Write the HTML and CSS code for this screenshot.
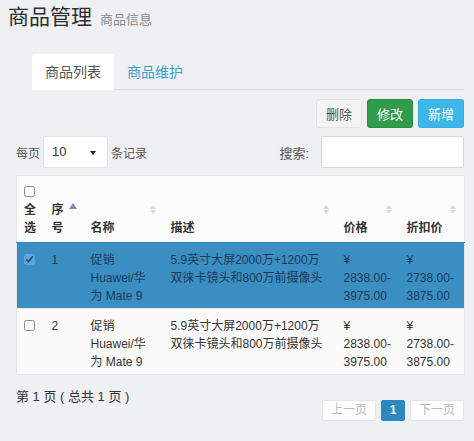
FILE: index.html
```html
<!DOCTYPE html>
<html lang="zh-CN">
<head>
<meta charset="utf-8">
<title>商品管理</title>
<link rel="stylesheet" href="styles.css">
</head>
<body>
<header class="page-header">
  <h1 class="title">商品管理</h1>
  <span class="subtitle">商品信息</span>
</header>
<main class="content">
  <nav class="tabs">
    <a class="tab active">商品列表</a>
    <a class="tab">商品维护</a>
  </nav>
  <div class="toolbar">
    <button class="btn btn-default">删除</button>
    <button class="btn btn-success">修改</button>
    <button class="btn btn-info">新增</button>
  </div>
  <div class="filters">
    <div class="page-size">
      <span>每页</span>
      <div class="select"><span>10</span><i class="caret"></i></div>
      <span>条记录</span>
    </div>
    <label class="search">
      <span>搜索:</span>
      <input class="search-input" type="text">
    </label>
  </div>
  <table class="grid">
    <colgroup>
      <col class="c-check"><col class="c-no"><col class="c-name"><col class="c-desc"><col class="c-price"><col class="c-disc">
    </colgroup>
    <thead>
      <tr>
        <th><input type="checkbox" class="cb"><br>全<br>选</th>
        <th class="sortable">序<br>号<i class="sort-asc"></i></th>
        <th class="sortable">名称<i class="sort-both"></i></th>
        <th class="sortable">描述<i class="sort-both"></i></th>
        <th class="sortable">价格<i class="sort-both"></i></th>
        <th class="sortable">折扣价<i class="sort-both"></i></th>
      </tr>
    </thead>
    <tbody>
      <tr class="selected">
        <td><input type="checkbox" class="cb" checked></td>
        <td>1</td>
        <td>促销 Huawei/华为 Mate 9</td>
        <td>5.9英寸大屏2000万+1200万双徕卡镜头和800万前摄像头</td>
        <td>¥ 2838.00-3975.00</td>
        <td>¥ 2738.00-3875.00</td>
      </tr>
      <tr>
        <td><input type="checkbox" class="cb"></td>
        <td>2</td>
        <td>促销 Huawei/华为 Mate 9</td>
        <td>5.9英寸大屏2000万+1200万双徕卡镜头和800万前摄像头</td>
        <td>¥ 2838.00-3975.00</td>
        <td>¥ 2738.00-3875.00</td>
      </tr>
    </tbody>
  </table>
  <footer class="table-footer">
    <div class="page-info">第 1 页 ( 总共 1 页 )</div>
    <div class="pager">
      <span class="pg disabled">上一页</span>
      <span class="pg current">1</span>
      <span class="pg disabled">下一页</span>
    </div>
  </footer>
</main>
</body>
</html>
```
FILE: styles.css
```css
* { box-sizing: border-box; }
html, body { margin: 0; padding: 0; }
body {
  background: #eef0f4;
  color: #333;
  font-family: "Liberation Sans", "Noto Sans CJK SC", sans-serif;
  font-size: 12px;
  width: 474px;
  height: 441px;
  overflow: hidden;
}
.page-header {
  display: flex;
  align-items: baseline;
  padding: 2px 0 0 8px;
  height: 32px;
}
.title {
  margin: 0;
  font-size: 21px;
  font-weight: normal;
  line-height: 30px;
  color: #2e2e2e;
}
.subtitle {
  margin-left: 8px;
  font-size: 13px;
  color: #8a8a8a;
}
.content {
  padding: 0 10px 0 16px;
}
.tabs {
  display: flex;
  margin: 22px 0 0 16px;
  border-bottom: 1px solid #dadde2;
  height: 36px;
}
.tab {
  display: block;
  height: 36px;
  line-height: 36px;
  padding: 0 13px;
  font-size: 14px;
  color: #3a9fc8;
}
.tab.active {
  background: #fff;
  color: #555;
  border-radius: 3px 3px 0 0;
}
.toolbar {
  display: flex;
  justify-content: flex-end;
  gap: 5px;
  margin-top: 9px;
}
.btn {
  height: 29px;
  width: 46px;
  padding: 0;
  font-family: inherit;
  font-size: 13px;
  white-space: nowrap;
  border-radius: 3px;
  border: 1px solid transparent;
}
.btn-default { background: #f4f4f4; border-color: #e2e2e2; color: #555; }
.btn-success { background: #2f9b4b; border-color: #2a8c43; color: #fff; }
.btn-info { background: #3db7ea; border-color: #35acdf; color: #fff; }
.filters {
  display: flex;
  justify-content: space-between;
  align-items: center;
  margin-top: 8px;
  height: 32px;
}
.page-size {
  display: flex;
  align-items: center;
  gap: 3px;
  color: #555;
}
.select {
  position: relative;
  width: 65px;
  height: 32px;
  background: #fff;
  border: 1px solid #e2e4e8;
  border-radius: 2px;
  padding-left: 8px;
  line-height: 30px;
  font-size: 13px;
  color: #333;
}
.caret {
  position: absolute;
  right: 11px;
  top: 14px;
  border-left: 3px solid transparent;
  border-right: 3px solid transparent;
  border-top: 4px solid #222;
}
.search {
  display: flex;
  align-items: center;
  gap: 12px;
  color: #555;
  font-size: 13px;
}
.search-input {
  width: 143px;
  height: 32px;
  background: #fff;
  border: 1px solid #d4d7dc;
  border-radius: 2px;
}
.grid {
  width: 448px;
  margin-top: 7px;
  table-layout: fixed;
  border-collapse: collapse;
  background: #fcfcfd;
  border: 1px solid #e3e5e9;
}
.c-check { width: 28px; }
.c-no { width: 39px; }
.c-name { width: 80px; }
.c-desc { width: 173px; }
.c-price { width: 63px; }
.c-disc { width: 65px; }
.grid th, .grid td {
  text-align: left;
  padding: 5px 6px 5px 7px;
  line-height: 18px;
  font-size: 12px;
}
.grid th {
  position: relative;
  height: 66px;
  vertical-align: bottom;
  font-weight: bold;
  color: #333;
  padding-top: 7px;
}
.grid td {
  vertical-align: top;
  height: 66px;
  padding-top: 8px;
  padding-bottom: 3px;
  border-top: 1px solid #e3e5e9;
  color: #333;
}
.grid tbody tr { background: #fafafa; }
.grid tbody tr.selected { background: #3a8ec2; }
.grid tbody tr.selected td { color: #1f3a58; border-top-color: #3684b5; }
.cb {
  margin: 0;
  width: 11px;
  height: 11px;
  vertical-align: -1px;
  accent-color: #5aaef0;
  opacity: 0.85;
}
.sort-both, .sort-asc {
  position: absolute;
  top: 28px;
  right: 8px;
  width: 6px;
  height: 12px;
}
.sort-both::before, .sort-both::after, .sort-asc::before {
  content: "";
  position: absolute;
  left: 0;
  border-left: 3px solid transparent;
  border-right: 3px solid transparent;
}
.sort-both::before { top: 1px; border-bottom: 4px solid #d6d8dc; }
.sort-both::after { top: 6px; border-top: 4px solid #d6d8dc; }
.sort-asc { right: 7px; top: 26px; width: 8px; }
.sort-asc::before {
  top: 1px;
  border-left-width: 4px;
  border-right-width: 4px;
  border-bottom: 6px solid #8088bd;
}
.table-footer {
  display: flex;
  justify-content: space-between;
  align-items: flex-start;
}
.page-info {
  margin-top: 13px;
  font-size: 13px;
  line-height: 18px;
  color: #333;
}
.pager {
  display: flex;
  gap: 5px;
  margin-top: 25px;
}
.pg {
  display: block;
  height: 21px;
  line-height: 19px;
  font-size: 12px;
  text-align: center;
  border: 1px solid #e3e5e8;
  border-radius: 2px;
  background: #fff;
}
.pg.disabled { width: 54px; color: #b8b8b8; }
.pg.current { width: 24px; background: #2c88be; border-color: #2c88be; color: #fff; font-weight: bold; }
```
